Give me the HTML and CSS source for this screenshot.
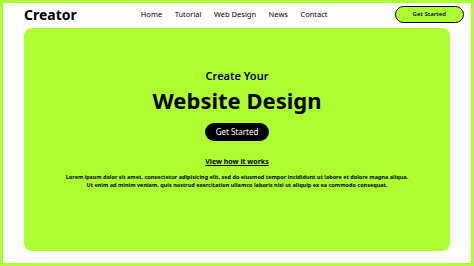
FILE: index.html
```html
<!DOCTYPE html>
<html>
<head>
<meta charset="utf-8">
<link rel="stylesheet" href="styles.css">
</head>
<body>
<div class="frame">
  <header class="nav">
    <div class="logo">Creator</div>
    <nav class="links">
      <a>Home</a>
      <a>Tutorial</a>
      <a>Web Design</a>
      <a>News</a>
      <a>Contact</a>
    </nav>
    <a class="btn-top">Get Started</a>
  </header>
  <main class="hero">
    <div class="sub">Create Your</div>
    <h1 class="title">Website Design</h1>
    <a class="btn-main">Get Started</a>
    <a class="view">View how it works</a>
    <p class="lorem">Lorem ipsum dolor sit amet, consectetur adipisicing elit, sed do eiusmod tempor incididunt ut labore et dolore magna aliqua.<br>Ut enim ad minim veniam, quis nostrud exercitation ullamco laboris nisi ut aliquip ex ea commodo consequat.</p>
  </main>
</div>
</body>
</html>
```
FILE: styles.css
```css
html, body { margin: 0; padding: 0; }
body {
  background: #adff2f;
  font-family: "Comic Sans MS", "Noto Sans", sans-serif;
  color: #000;
  width: 474px;
  height: 266px;
  padding: 3px;
  box-sizing: border-box;
}
.frame {
  background: #fff;
  height: 260px;
  padding: 0 21px 12px 21px;
  box-sizing: border-box;
  display: flex;
  flex-direction: column;
}
.nav {
  height: 25px;
  padding-bottom: 3px;
  box-sizing: border-box;
  display: flex;
  align-items: center;
}
.logo { font-weight: 700; font-size: 14px; }
.links {
  display: flex;
  gap: 12.5px;
  font-size: 7.5px;
  margin-left: 64px;
}
.btn-top {
  margin-left: auto;
  margin-right: -14px;
  background: #adff2f;
  border: 1px solid #000;
  border-radius: 9px;
  font-size: 6px;
  line-height: 8px;
  padding: 3.5px 17px;
  font-weight: 600;
}
.hero {
  flex: 1;
  background: #adff2f;
  border-radius: 8px;
  display: flex;
  flex-direction: column;
  align-items: center;
  padding-top: 41px;
}
.sub { font-size: 11px; font-weight: 600; line-height: 14px; }
.title { margin: 0; font-size: 22px; font-weight: 700; line-height: 28px; margin-top: 3px; }
.btn-main {
  background: #000;
  color: #fff;
  border-radius: 10px;
  font-size: 8px;
  line-height: 10px;
  padding: 4px 11px;
  margin-top: 9px;
}
.view {
  font-size: 7px;
  font-weight: 700;
  text-decoration: underline;
  margin-top: 16px;
}
.lorem {
  font-size: 5.5px;
  font-weight: 700;
  text-align: center;
  line-height: 8px;
  margin: 7px 0 0;
}
```
